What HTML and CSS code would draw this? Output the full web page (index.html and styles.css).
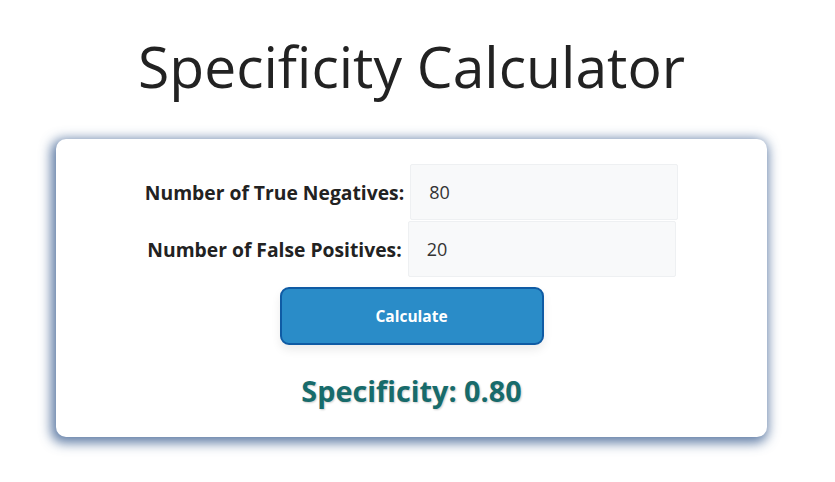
FILE: index.html
```html
<!DOCTYPE html>
<html lang="en">
<head>
    <meta charset="UTF-8">
    <meta name="viewport" content="width=device-width, initial-scale=1.0">
    <title>Specificity Calculator</title>
    <link rel="stylesheet" href="styles.css">
</head>
<body>
    <h1 class="title">Specificity Calculator</h1>

    <div class="calculator">
        <div class="field">
            <label for="tn">Number of True Negatives:</label>
            <input type="number" id="tn" value="80">
        </div>
        <div class="field">
            <label for="fp">Number of False Positives:</label>
            <input type="number" id="fp" value="20">
        </div>
        <button class="calc-btn" id="calc">Calculate</button>
        <div class="result" id="result">Specificity: 0.80</div>
    </div>

    <script>
        document.getElementById('calc').addEventListener('click', () => {
            const tn = parseFloat(document.getElementById('tn').value) || 0;
            const fp = parseFloat(document.getElementById('fp').value) || 0;
            const result = document.getElementById('result');
            if (tn + fp === 0) {
                result.textContent = 'Specificity: N/A';
                return;
            }
            result.textContent = 'Specificity: ' + (tn / (tn + fp)).toFixed(2);
        });
    </script>
</body>
</html>
```

FILE: styles.css
```css
body {
    font-family: "Open Sans", "Noto Sans", Arial, sans-serif;
    margin: 0;
    padding: 28px 12px 40px 0;
    color: #222;
    background-color: #fff;
}
.title {
    font-size: 57px;
    font-weight: 400;
    text-align: center;
    margin: 0 0 35px;
    line-height: 76px;
    color: #222;
}
.calculator {
    width: 711px;
    box-sizing: border-box;
    margin: 0 auto;
    padding: 25px 0 27px;
    background-color: #fff;
    border-radius: 10px;
    box-shadow: -2px 3px 12px 3px rgba(60, 95, 145, 0.8);
    display: flex;
    flex-direction: column;
    align-items: center;
}
.field {
    display: flex;
    align-items: center;
    gap: 6px;
    margin-bottom: 1px;
}
.field label {
    font-size: 19.3px;
    font-weight: 700;
    color: #222;
}
.field input {
    width: 268px;
    height: 56px;
    box-sizing: border-box;
    padding: 0 18px;
    font-family: inherit;
    font-size: 18px;
    color: #333;
    background-color: #f8f9fa;
    border: 1px solid #eef0f2;
    border-radius: 2px;
    outline: none;
    -moz-appearance: textfield;
}
.field input::-webkit-outer-spin-button,
.field input::-webkit-inner-spin-button {
    -webkit-appearance: none;
    margin: 0;
}
.calc-btn {
    width: 264px;
    height: 58px;
    margin-top: 9px;
    font-family: inherit;
    font-size: 15.5px;
    font-weight: 700;
    color: #fff;
    background-color: #2a8cc8;
    border: 2px solid #0f5ba4;
    border-radius: 9px;
    box-shadow: 0 5px 10px rgba(0, 0, 0, 0.08);
    cursor: pointer;
}
.calc-btn:hover {
    background-color: #237bb2;
}
.result {
    margin-top: 26px;
    font-size: 28.8px;
    font-weight: 700;
    color: #176b6b;
    text-shadow: 1px 1px 2px rgba(0, 0, 0, 0.2);
}
```
